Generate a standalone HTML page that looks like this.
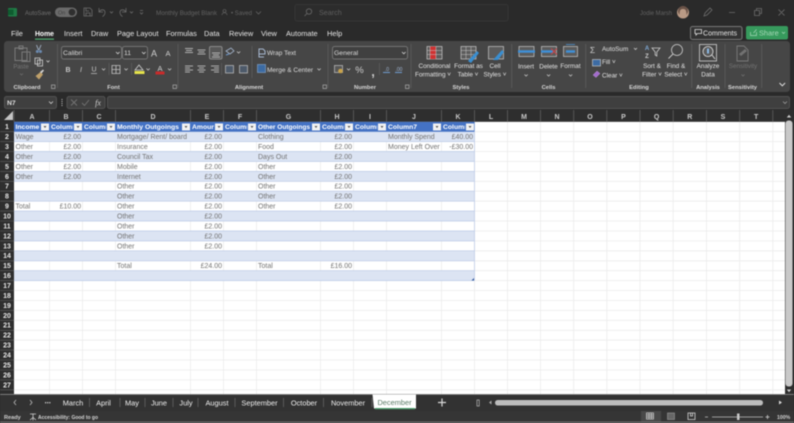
<!DOCTYPE html>
<html lang="en"><head><meta charset="utf-8"><title>Monthly Budget Blank - Excel</title>
<style>
html,body{margin:0;padding:0;width:794px;height:423px;overflow:hidden;background:#2a2a2a}
svg{display:block;filter:blur(.4px)}
text{font-family:"Liberation Sans",sans-serif}
.c text,.c{font-size:7px;fill:#737373}
.h{font-size:6.8px;font-weight:bold;fill:#fff}
.ch{font-size:7px;fill:#c8c8c8;text-anchor:middle;font-weight:bold}
.rn{font-size:7px;fill:#e6e6e6;text-anchor:middle;font-weight:bold}
.t{font-size:7.4px;fill:#e6e6e6}
.r{font-size:6.4px;fill:#e4e4e4}
.rm{font-size:6.4px;fill:#e4e4e4;text-anchor:middle}
.g{font-size:5.8px;fill:#d8d8d8;text-anchor:middle;font-weight:bold}
.s{font-size:7.4px;fill:#efefef;text-anchor:middle}
.ic{fill:none;stroke:#c4c4c4;stroke-width:.8}
</style></head><body>
<svg width="794" height="423" viewBox="0 0 794 423" xmlns="http://www.w3.org/2000/svg">
<rect width="794" height="423" fill="#2a2a2a"/>

<!-- title bar -->
<rect x="8" y="8" width="9" height="8.5" rx="1" fill="#1f7a45"/><rect x="8" y="9.5" width="5.5" height="5.5" fill="#0f5c30"/>
<text x="25" y="15" font-size="6.6" fill="#707070" textLength="26" lengthAdjust="spacingAndGlyphs">AutoSave</text>
<rect x="55" y="7.5" width="22" height="9.500" rx="4.700" fill="#6b6b6b"/><circle cx="72" cy="12.200" r="3.400" fill="#2f2f2f"/>
<text x="58" y="14.600" font-size="5.500" fill="#3f3f3f">On</text>
<path class="ic" style="stroke:#6c6c6c" d="M84 8h6l2 2v6h-8zM86 8v3h3M86 16v-3h4v3"/>
<path class="ic" style="stroke:#6c6c6c" d="M99 8v4h4M99 12c2-3 6-3 6 .5 0 2-1 3-2.500 4"/>
<path class="ic" style="stroke:#6c6c6c" d="M126 8v4h-4M126 12c-2-3-6-3-6 .5 0 2 1 3 2.500 4"/>
<path class="ic" style="stroke:#6c6c6c" d="M110 11.500l1.500 1.500 1.500-1.500M130 11.500l1.500 1.500 1.500-1.500M140 10.500h3M140 12.500l1.500 1.500 1.500-1.500"/>
<text x="156" y="15" font-size="6.400" fill="#636363" textLength="61" lengthAdjust="spacingAndGlyphs">Monthly Budget Blank</text>
<path class="ic" style="stroke:#5e5e5e" d="M222 15c0-3 5-3 5 0M224.500 9.500a1.500 1.500 0 1 0 .01 0"/>
<text x="231" y="15" font-size="6.600" fill="#636363" textLength="21" lengthAdjust="spacingAndGlyphs">• Saved</text>
<path class="ic" style="stroke:#636363" d="M256 11.500l2.500 2.500 2.500-2.500"/>
<rect x="295" y="4.500" width="213" height="16.500" rx="2" fill="#2c2c2c" stroke="#353535"/>
<circle cx="309" cy="11.500" r="2.700" class="ic" style="stroke:#6a6a6a"/><path class="ic" style="stroke:#6a6a6a" d="M307 13.500l-2.500 2.500"/>
<text x="319" y="15" font-size="7.200" fill="#5f5f5f">Search</text>
<text x="640" y="15" font-size="6.400" fill="#626262" textLength="32" lengthAdjust="spacingAndGlyphs">Jodie Marsh</text>
<circle cx="683" cy="12.500" r="6" fill="#b99a85"/><path d="M678 12c0-5 3-6 5-6s5 1 5 6l-1.500 3c0-5-1-6-3.500-6s-3.500 1-3.500 6z" fill="#6a5348"/>
<path class="ic" style="stroke:#6e6e6e" d="M704 16l1-3 5-5 2 2-5 5z"/>
<path class="ic" style="stroke:#6e6e6e" d="M729 12.500h6M754.500 10.500h5v5h-5zM756.500 10.500v-2h5v5h-2M778.500 9.500l6 6M784.500 9.500l-6 6"/>

<!-- comments/share -->
<rect x="690.500" y="26.500" width="51.500" height="13" rx="2" fill="#333" stroke="#777"/>
<path d="M695 29.500h6.500v4h-4l-1.500 1.500v-1.500h-1z" fill="none" stroke="#e0e0e0" stroke-width=".8"/>
<text x="703" y="35.500" font-size="7" fill="#e8e8e8" textLength="34" lengthAdjust="spacingAndGlyphs">Comments</text>
<rect x="746" y="26" width="42" height="13.500" rx="2" fill="#379a5d"/>
<path d="M750.500 32v3.500h6V32M753.500 33l3-3.500" fill="none" stroke="#a7d9b8" stroke-width=".7"/>
<text x="759" y="35.500" font-size="7.400" fill="#a7d9b8">Share</text>
<path d="M782 32l1.500 1.500 1.500-1.500" fill="none" stroke="#a7d9b8" stroke-width=".7"/>

<!-- menu tabs -->
<text class="t" x="11" y="36">File</text>
<text class="t" x="35" y="36" font-weight="bold" style="fill:#fff" textLength="19" lengthAdjust="spacingAndGlyphs">Home</text>
<rect x="35" y="38.500" width="19" height="1.300" fill="#4fa56e"/>
<text class="t" x="64" y="36">Insert</text>
<text class="t" x="91" y="36">Draw</text>
<text class="t" x="117" y="36">Page Layout</text>
<text class="t" x="166" y="36">Formulas</text>
<text class="t" x="204" y="36">Data</text>
<text class="t" x="229" y="36">Review</text>
<text class="t" x="261" y="36">View</text>
<text class="t" x="286" y="36">Automate</text>
<text class="t" x="327" y="36">Help</text>

<!-- ribbon panel -->
<rect x="4" y="41" width="786" height="51" rx="3.500" fill="#464646"/>
<path stroke="#5e5e5e" stroke-width=".8" d="M57.500 44v44M178 44v44M328 44v44M411 44v44M511.700 44v44M585.700 44v44M691.700 44v44M725 44v44M761.700 44v44" fill="none"/>
<g class="g"><text class="g" x="27" y="89">Clipboard</text><text class="g" x="113.500" y="89">Font</text><text class="g" x="249" y="89">Alignment</text><text class="g" x="365" y="89">Number</text><text class="g" x="461" y="89">Styles</text><text class="g" x="548.500" y="89">Cells</text><text class="g" x="639" y="89">Editing</text><text class="g" x="708" y="89">Analysis</text><text class="g" x="742.500" y="89">Sensitivity</text></g>
<path class="ic" style="stroke:#a8a8a8;stroke-width:.7" d="M51.500 85h3.500v3.500h-3.500zM173 85h3.500v3.500H173zM323 85h3.500v3.500H323zM405.500 85h3.500v3.500h-3.500z"/>

<!-- clipboard -->
<path fill="none" stroke="#7a7a7a" stroke-width="1" d="M15 48h12v12.500H15zM19 46h4v3h-4zM22 52h8v9.500h-8z"/>
<text x="21" y="68.500" font-size="6" text-anchor="middle" fill="#777">Paste</text>
<path d="M20 73.500l1.500 1.500 1.500-1.500" fill="none" stroke="#707070" stroke-width=".7"/>
<path d="M36.500 45l2 5M41 45l-2 5" stroke="#a4b4c8" stroke-width=".9" fill="none"/><circle cx="37.300" cy="51.500" r="1.500" fill="#6b8ab0"/><circle cx="40.500" cy="51.500" r="1.500" fill="#6b8ab0"/>
<path d="M35 58h5v6h-5zM37.500 60h5v6h-5z" fill="#464646" stroke="#d4d4d4" stroke-width=".8"/>
<path d="M46.500 60.500l1.500 1.500 1.500-1.500" fill="none" stroke="#d0d0d0" stroke-width=".8"/>
<path d="M35.500 76l5-4 2.500 2.500-4 5z" fill="#bfa06a"/><path d="M40 72l3-2.500 1 1-2.500 3z" fill="#d5d5d5"/>

<!-- font -->
<rect x="61.500" y="46.500" width="60" height="12.500" rx="2" fill="#404040" stroke="#737373"/>
<text x="63" y="55" font-size="6.800" fill="#dadada">Calibri</text>
<path class="ic" style="stroke:#d4d4d4" d="M116 52l1.800 1.800 1.800-1.800"/>
<rect x="122.500" y="46.500" width="25" height="12.500" rx="2" fill="#404040" stroke="#737373"/>
<text x="124" y="55" font-size="6.800" fill="#dadada">11</text>
<path class="ic" style="stroke:#d4d4d4" d="M142 52l1.800 1.800 1.800-1.800"/>
<text x="154" y="56.500" font-size="9" text-anchor="middle" fill="#cfcfcf">A</text>
<text x="168" y="56" font-size="7.500" text-anchor="middle" fill="#cfcfcf">A</text>
<text x="68" y="72" font-size="7" font-weight="bold" text-anchor="middle" fill="#c9c9c9">B</text>
<text x="81" y="72" font-size="7" font-style="italic" text-anchor="middle" fill="#c9c9c9">I</text>
<text x="94" y="71.500" font-size="7" text-anchor="middle" fill="#c9c9c9">U</text><path stroke="#c9c9c9" stroke-width=".7" d="M91 73.500h6"/>
<path class="ic" style="stroke:#c9c9c9" d="M102 68.500l1.600 1.600 1.600-1.600M124.500 68.500l1.600 1.600 1.600-1.600M146.500 68.500l1.600 1.600 1.600-1.600M168 68.500l1.600 1.600 1.600-1.600"/>
<path class="ic" d="M112 65.500h8v8h-8zM116 65.500v8M112 69.500h8"/>
<path stroke="#5e5e5e" stroke-width=".7" d="M109 63v12M131.500 63v12"/>
<path d="M135 70l4-5 4 5z" fill="none" stroke="#d0d0d0" stroke-width=".8"/><rect x="134.500" y="71" width="10" height="3" fill="#e5e34a"/>
<text x="160" y="71" font-size="7.500" text-anchor="middle" fill="#d0d0d0">A</text><rect x="155.500" y="71.500" width="9" height="3" fill="#c92b2b"/>

<!-- alignment -->
<rect x="209.500" y="46.500" width="12.500" height="12.500" rx="1.500" fill="#575757" stroke="#8a8a8a"/>
<path stroke="#cfcfcf" stroke-width=".8" fill="none" d="M185 48.500h8M186 50.500h6M185 52.500h8M197.500 50h8M198.500 52h6M197.500 54h8M212 53h8M213 55h6M212 57h8"/>
<path d="M226 51l5-3 3 3-4 3z" fill="none" stroke="#a6b7cf" stroke-width=".8"/><path d="M226 55l3-1" stroke="#6f9bd0" stroke-width="1"/>
<path class="ic" style="stroke:#c9c9c9" d="M237 51.500l1.600 1.600 1.600-1.600"/>
<path stroke="#cfcfcf" stroke-width=".8" fill="none" d="M185 66h8M185 68h5M185 70h8M185 72h5M197.500 66h8M199 68h5M197.500 70h8M199 72h5M211 66h8M214 68h5M211 70h8M214 72h5"/>
<rect x="225.500" y="65.500" width="8" height="7.500" fill="#4d5a6a" stroke="#c0c0c0" stroke-width=".7"/>
<rect x="239.500" y="65.500" width="8" height="7.500" fill="#4d5a6a" stroke="#c0c0c0" stroke-width=".7"/>
<path stroke="#5e5e5e" stroke-width=".7" d="M221.500 63v12M252 46v32"/>
<path d="M259 49h4l2 2v3h-6zM259 53v4h5" fill="none" stroke="#a6b7cf" stroke-width="1"/>
<text x="267" y="55" font-size="6.800" fill="#dcdcdc" textLength="29" lengthAdjust="spacingAndGlyphs">Wrap Text</text>
<rect x="257.500" y="64.500" width="8" height="8" fill="#3c6ba3" stroke="#7f9fc4" stroke-width=".7"/>
<text x="267" y="72" font-size="6.800" fill="#dcdcdc" textLength="46" lengthAdjust="spacingAndGlyphs">Merge &amp; Center</text>
<path class="ic" style="stroke:#c9c9c9" d="M317.500 68.500l1.600 1.600 1.600-1.600"/>

<!-- number -->
<rect x="332.500" y="46.500" width="75" height="12.500" rx="2" fill="#404040" stroke="#737373"/>
<text x="334" y="55" font-size="6.800" fill="#dadada">General</text>
<path class="ic" style="stroke:#d4d4d4" d="M402 52l1.800 1.800 1.800-1.800"/>
<rect x="334.500" y="65.500" width="8" height="7" fill="#575757" stroke="#c4c4c4" stroke-width=".7"/><circle cx="340.500" cy="71" r="2.300" fill="#c8a24a"/>
<path class="ic" style="stroke:#c9c9c9" d="M347 68.500l1.600 1.600 1.600-1.600"/>
<text x="359.500" y="73" font-size="9.500" text-anchor="middle" fill="#cdcdcd">%</text>
<text x="373" y="76" font-size="13" font-weight="bold" text-anchor="middle" fill="#cdcdcd">,</text>
<path stroke="#5e5e5e" stroke-width=".7" d="M379.500 63v12"/>
<text x="387" y="71" font-size="5" text-anchor="middle" fill="#9fb4d0">.0</text><path d="M383 72.500h7" stroke="#6f9bd0"/>
<text x="399" y="71" font-size="5" text-anchor="middle" fill="#9fb4d0">.00</text><path d="M395 72.500h7" stroke="#6f9bd0"/>

<!-- styles -->
<g fill="none">
<rect x="427" y="46.500" width="15" height="12.500" fill="#5b5b5b" stroke="#c8c8c8" stroke-width=".7"/><rect x="430" y="46.500" width="6" height="12.500" fill="#cf3131"/>
<path stroke="#c8c8c8" stroke-width=".5" d="M427 50.500h15M427 54.500h15M430 46.500v12.500M436 46.500v12.500"/>
<rect x="461" y="46.500" width="15" height="12.500" fill="#5b5b5b" stroke="#c8c8c8" stroke-width=".7"/><path stroke="#c8c8c8" stroke-width=".5" d="M461 50.500h15M461 54.500h15M466 46.500v12.500M471 46.500v12.500"/>
<path d="M468 61l9-10 2 2-8 10z" fill="#3a8ed0"/>
<rect x="488.500" y="46.500" width="15" height="12.500" fill="#5b5b5b" stroke="#c8c8c8" stroke-width=".7"/><path d="M493 60l9-10 2 2-6 8z" fill="#3a8ed0"/>
</g>
<text class="rm" x="434.500" y="68">Conditional</text>
<text class="rm" x="433" y="76.500">Formatting ˅</text>
<text class="rm" x="468.500" y="68">Format as</text>
<text class="rm" x="468" y="76.500">Table ˅</text>
<text class="rm" x="495" y="68">Cell</text>
<text class="rm" x="495" y="76.500">Styles ˅</text>

<!-- cells -->
<rect x="519" y="46.500" width="15" height="10" fill="#5b5b5b" stroke="#c8c8c8" stroke-width=".7"/><path d="M518 51.500h17" stroke="#3f8fd6" stroke-width="2.500"/>
<rect x="541.500" y="46.500" width="15" height="10" fill="#5b5b5b" stroke="#c8c8c8" stroke-width=".7"/><path d="M541 51.500h12" stroke="#3f8fd6" stroke-width="2.500"/><path d="M551 48.500l6 6M557 48.500l-6 6" stroke="#c9464a"/>
<rect x="563.500" y="46.500" width="14" height="10" fill="#5b5b5b" stroke="#c8c8c8" stroke-width=".7"/><path d="M566 51.500h9" stroke="#3f8fd6" stroke-width="2.500"/><path d="M566 44.500h9" stroke="#4f93d0" stroke-width=".8"/>
<text class="rm" x="526" y="68.500">Insert</text><text class="rm" x="548.500" y="68.500">Delete</text><text class="rm" x="570.500" y="68">Format</text>
<path class="ic" style="stroke:#c9c9c9" d="M524.500 74.500l1.600 1.600 1.600-1.600M547 74.500l1.600 1.600 1.600-1.600M569 74.500l1.600 1.600 1.600-1.600"/>

<!-- editing -->
<text x="592.500" y="53" font-size="8.500" text-anchor="middle" fill="#d0d0d0">Σ</text>
<text class="r" x="602" y="51">AutoSum</text>
<path class="ic" style="stroke:#c9c9c9" d="M634 48l1.500 1.500 1.500-1.500"/>
<rect x="592.500" y="59.500" width="8" height="6.500" fill="#3c6ba3" stroke="#c0c0c0" stroke-width=".7"/>
<text class="r" x="602" y="64">Fill ˅</text>
<path d="M593 75l4-4 3 2.500-4 4z" fill="#a26ccc" stroke="#c99be0" stroke-width=".4"/>
<text class="r" x="602" y="77.500">Clear ˅</text>
<text x="647" y="50" font-size="6" text-anchor="middle" fill="#7fa9d6" font-weight="bold">A</text>
<text x="647" y="58" font-size="6" text-anchor="middle" fill="#cdcdcd" font-weight="bold">Z</text>
<path d="M652 48h8l-3.200 4v4l-1.600-1v-3z" fill="none" stroke="#cdcdcd" stroke-width=".8"/>
<circle cx="677" cy="50" r="5.500" fill="none" stroke="#cdcdcd" stroke-width=".8"/><path d="M673 54l-4.500 4.500" stroke="#cdcdcd" stroke-width=".9"/>
<text class="rm" x="652" y="68">Sort &amp;</text><text class="rm" x="652" y="76.500">Filter ˅</text>
<text class="rm" x="676" y="68">Find &amp;</text><text class="rm" x="676" y="76.500">Select ˅</text>

<!-- analysis -->
<rect x="699.500" y="44.500" width="17" height="16.500" fill="#454545" stroke="#d0d0d0" stroke-width=".8"/>
<circle cx="708" cy="51.500" r="5" fill="#5a5a5a" stroke="#dcdcdc" stroke-width=".8"/><path d="M708 48.500v5" stroke="#8ec0ef" stroke-width="1.800"/><path d="M712 55l3 4" stroke="#d0d0d0"/>
<text class="rm" x="708" y="68">Analyze</text><text class="rm" x="708" y="76.500">Data</text>
<!-- sensitivity -->
<path d="M737 46h7l4 4v11h-11z" fill="none" stroke="#7a7a7a" stroke-width=".9"/><path d="M739 54l6-5 2 2-6 5z" fill="#727272"/>
<text x="743" y="68" font-size="6.300" text-anchor="middle" fill="#727272">Sensitivity</text>
<path class="ic" style="stroke:#707070" d="M741.500 74.500l1.500 1.500 1.500-1.500"/>
<path d="M779.500 83l2.800 2.800 2.800-2.800" fill="none" stroke="#e0e0e0" stroke-width="1"/>

<!-- formula bar -->
<rect x="4.500" y="96.500" width="52" height="12" rx="2" fill="#3f3f3f" stroke="#525252"/>
<text x="7" y="105" font-size="6.800" font-weight="bold" fill="#dedede">N7</text>
<path class="ic" style="stroke:#cfcfcf" d="M49 101.500l2 2 2-2"/>
<path stroke="#c0c0c0" stroke-width="1" stroke-dasharray="1 1" d="M62 99v7"/>
<rect x="67" y="96.500" width="38" height="12" rx="2" fill="#3f3f3f" stroke="#525252"/>
<path d="M71 99.500l6 6M77 99.500l-6 6M82 103l2.500 2.500 4.500-5.500" stroke="#737373" fill="none" stroke-width=".9"/>
<text x="98" y="105.500" font-size="8" font-style="italic" text-anchor="middle" fill="#d4d4d4" style="font-family:'Liberation Serif',serif">fx</text>
<rect x="107.500" y="96.500" width="682" height="12" rx="2" fill="#3f3f3f" stroke="#525252"/>
<path class="ic" style="stroke:#9a9a9a" d="M783 101.500l2 2 2-2"/>

<!-- sheet -->
<rect x="14" y="121.700" width="771" height="272.800" fill="#fff"/>
<g stroke="#ececec" stroke-width=".8" fill="none">
<path d="M49.500 122V394M82.500 122V394M115.500 122V394M190.500 122V394M223.500 122V394M256.500 122V394M320.500 122V394M353.500 122V394M386.500 122V394M441.500 122V394M474.500 122V394M507.500 122V394M540.500 122V394M573.700 122V394M606.800 122V394M640 122V394M673.200 122V394M706.500 122V394M739.700 122V394M772.800 122V394"/>
<path d="M14 131.700H785M14 141.600H785M14 151.500H785M14 161.400H785M14 171.400H785M14 181.300H785M14 191.200H785M14 201.200H785M14 211.100H785M14 221H785M14 231H785M14 240.900H785M14 250.800H785M14 260.800H785M14 270.700H785M14 280.600H785M14 290.500H785M14 300.500H785M14 310.400H785M14 320.300H785M14 330.300H785M14 340.200H785M14 350.100H785M14 360H785M14 370H785M14 379.900H785M14 389.800H785"/>
</g>
<!-- table bands -->
<g fill="#dce4f3">
<rect x="14" y="131.700" width="460.500" height="9.900"/><rect x="14" y="151.500" width="460.500" height="9.900"/><rect x="14" y="171.400" width="460.500" height="9.900"/><rect x="14" y="191.200" width="460.500" height="10"/><rect x="14" y="211.100" width="460.500" height="9.900"/><rect x="14" y="231" width="460.500" height="9.900"/><rect x="14" y="250.800" width="460.500" height="10"/><rect x="14" y="270.700" width="460.500" height="9.900"/>
</g>
<g stroke="#bccbe8" stroke-width=".7" fill="none">
<path d="M14 131.700H474.500M14 141.600H474.500M14 151.500H474.500M14 161.400H474.500M14 171.400H474.500M14 181.300H474.500M14 191.200H474.500M14 201.200H474.500M14 211.100H474.500M14 221H474.500M14 231H474.500M14 240.900H474.500M14 250.800H474.500M14 260.800H474.500M14 270.700H474.500M14 280.600H474.500M474.500 122V280.600"/>
</g>
<path d="M474 278v2.500h-2.500z" fill="#2f5597"/>
<!-- table header -->
<rect x="14" y="121.700" width="460.500" height="10" fill="#4472c4"/>
<g class="h">
<text class="h" x="15.500" y="129">Income</text>
<text class="h" x="51" y="129">Column1</text>
<text class="h" x="84" y="129">Column2</text>
<text class="h" x="117" y="129">Monthly Outgoings</text>
<text class="h" x="192" y="129">Amount</text>
<text class="h" x="225" y="129">Column3</text>
<text class="h" x="258" y="129" textLength="52" lengthAdjust="spacingAndGlyphs">Other Outgoings</text>
<text class="h" x="322" y="129">Column4</text>
<text class="h" x="355" y="129">Column5</text>
<text class="h" x="388" y="129">Column7</text>
<text class="h" x="443" y="129">Column6</text>
</g>
<g fill="#4472c4">
<rect x="73" y="122" width="9" height="9.500"/><rect x="106" y="122" width="9" height="9.500"/><rect x="214" y="122" width="9" height="9.500"/><rect x="247" y="122" width="9" height="9.500"/><rect x="344" y="122" width="9" height="9.500"/><rect x="377" y="122" width="9" height="9.500"/><rect x="465" y="122" width="9" height="9.500"/>
</g>
<g fill="#f2f2f2">
<rect x="41" y="123.500" width="8" height="7"/><rect x="74" y="123.500" width="8" height="7"/><rect x="107" y="123.500" width="8" height="7"/><rect x="182" y="123.500" width="8" height="7"/><rect x="215" y="123.500" width="8" height="7"/><rect x="248" y="123.500" width="8" height="7"/><rect x="312" y="123.500" width="8" height="7"/><rect x="345" y="123.500" width="8" height="7"/><rect x="378" y="123.500" width="8" height="7"/><rect x="433" y="123.500" width="8" height="7"/><rect x="466" y="123.500" width="8" height="7"/>
</g>
<g fill="#555">
<path d="M43.500 126h3l-1.500 2zM76.500 126h3l-1.500 2zM109.500 126h3l-1.500 2zM184.500 126h3l-1.500 2zM217.500 126h3l-1.500 2zM250.500 126h3l-1.500 2zM314.500 126h3l-1.500 2zM347.500 126h3l-1.500 2zM380.500 126h3l-1.500 2zM435.500 126h3l-1.500 2zM468.500 126h3l-1.500 2z"/>
</g>

<!-- cell text -->
<g class="c">
<text x="15.500" y="139.100">Wage</text><text x="15.500" y="149">Other</text><text x="15.500" y="158.900">Other</text><text x="15.500" y="168.800">Other</text><text x="15.500" y="178.800">Other</text><text x="15.500" y="208.600">Total</text>
</g>
<g class="c" text-anchor="end">
<text x="81" y="139.100">£2.00</text><text x="81" y="149">£2.00</text><text x="81" y="158.900">£2.00</text><text x="81" y="168.800">£2.00</text><text x="81" y="178.800">£2.00</text><text x="81" y="208.600">£10.00</text>
</g>
<g class="c">
<text x="117" y="139.100">Mortgage/ Rent/ board</text><text x="117" y="149">Insurance</text><text x="117" y="158.900">Council Tax</text><text x="117" y="168.800">Mobile</text><text x="117" y="178.800">Internet</text><text x="117" y="188.700">Other</text><text x="117" y="198.600">Other</text><text x="117" y="208.600">Other</text><text x="117" y="218.500">Other</text><text x="117" y="228.400">Other</text><text x="117" y="238.400">Other</text><text x="117" y="248.300">Other</text><text x="117" y="268.200">Total</text>
</g>
<g class="c" text-anchor="end">
<text x="222" y="139.100">£2.00</text><text x="222" y="149">£2.00</text><text x="222" y="158.900">£2.00</text><text x="222" y="168.800">£2.00</text><text x="222" y="178.800">£2.00</text><text x="222" y="188.700">£2.00</text><text x="222" y="198.600">£2.00</text><text x="222" y="208.600">£2.00</text><text x="222" y="218.500">£2.00</text><text x="222" y="228.400">£2.00</text><text x="222" y="238.400">£2.00</text><text x="222" y="248.300">£2.00</text><text x="222" y="268.200">£24.00</text>
</g>
<g class="c">
<text x="258" y="139.100">Clothing</text><text x="258" y="149">Food</text><text x="258" y="158.900">Days Out</text><text x="258" y="168.800">Other</text><text x="258" y="178.800">Other</text><text x="258" y="188.700">Other</text><text x="258" y="198.600">Other</text><text x="258" y="208.600">Other</text><text x="258" y="268.200">Total</text>
</g>
<g class="c" text-anchor="end">
<text x="352" y="139.100">£2.00</text><text x="352" y="149">£2.00</text><text x="352" y="158.900">£2.00</text><text x="352" y="168.800">£2.00</text><text x="352" y="178.800">£2.00</text><text x="352" y="188.700">£2.00</text><text x="352" y="198.600">£2.00</text><text x="352" y="208.600">£2.00</text><text x="352" y="268.200">£16.00</text>
</g>
<g class="c">
<text x="388" y="139.100">Monthly Spend</text><text x="388" y="149">Money Left Over</text>
</g>
<g class="c" text-anchor="end">
<text x="473" y="139.100">£40.00</text><text x="473" y="149">-£30.00</text>
</g>

<!-- column headers -->
<rect x="0" y="110" width="785" height="11.700" fill="#2e2e2e"/>
<path d="M13 111v9h-9z" fill="#c4c4c4"/>
<path stroke="#5f5f5f" stroke-width=".8" d="M14 110v11.700M49.500 110v11.700M82.500 110v11.700M115.500 110v11.700M190.500 110v11.700M223.500 110v11.700M256.500 110v11.700M320.500 110v11.700M353.500 110v11.700M386.500 110v11.700M441.500 110v11.700M474.500 110v11.700M507.500 110v11.700M540.500 110v11.700M573.700 110v11.700M606.800 110v11.700M640 110v11.700M673.200 110v11.700M706.500 110v11.700M739.700 110v11.700M772.800 110v11.700"/>
<g class="ch">
<text class="ch" x="32" y="119">A</text><text class="ch" x="66" y="119">B</text><text class="ch" x="99" y="119">C</text><text class="ch" x="153" y="119">D</text><text class="ch" x="207" y="119">E</text><text class="ch" x="240" y="119">F</text><text class="ch" x="288.500" y="119">G</text><text class="ch" x="337" y="119">H</text><text class="ch" x="370" y="119">I</text><text class="ch" x="414" y="119">J</text><text class="ch" x="458" y="119">K</text><text class="ch" x="491" y="119">L</text><text class="ch" x="524" y="119">M</text><text class="ch" x="557" y="119">N</text><text class="ch" x="590" y="119">O</text><text class="ch" x="623.400" y="119">P</text><text class="ch" x="656.600" y="119">Q</text><text class="ch" x="689.800" y="119">R</text><text class="ch" x="723" y="119">S</text><text class="ch" x="756.200" y="119">T</text>
</g>

<!-- row headers -->
<rect x="0" y="121.700" width="14" height="272.800" fill="#2e2e2e"/>
<path stroke="#5f5f5f" stroke-width=".6" d="M0 131.700H14M0 141.600H14M0 151.500H14M0 161.400H14M0 171.400H14M0 181.300H14M0 191.200H14M0 201.200H14M0 211.100H14M0 221H14M0 231H14M0 240.900H14M0 250.800H14M0 260.800H14M0 270.700H14M0 280.600H14M0 290.500H14M0 300.500H14M0 310.400H14M0 320.300H14M0 330.300H14M0 340.200H14M0 350.100H14M0 360H14M0 370H14M0 379.900H14M0 389.800H14"/>
<g class="rn">
<text class="rn" x="7" y="129.200">1</text><text class="rn" x="7" y="139.100">2</text><text class="rn" x="7" y="149">3</text><text class="rn" x="7" y="158.900">4</text><text class="rn" x="7" y="168.800">5</text><text class="rn" x="7" y="178.800">6</text><text class="rn" x="7" y="188.700">7</text><text class="rn" x="7" y="198.600">8</text><text class="rn" x="7" y="208.600">9</text><text class="rn" x="7" y="218.500">10</text><text class="rn" x="7" y="228.400">11</text><text class="rn" x="7" y="238.400">12</text><text class="rn" x="7" y="248.300">13</text><text class="rn" x="7" y="258.200">14</text><text class="rn" x="7" y="268.200">15</text><text class="rn" x="7" y="278.100">16</text><text class="rn" x="7" y="288">17</text><text class="rn" x="7" y="297.900">18</text><text class="rn" x="7" y="307.900">19</text><text class="rn" x="7" y="317.800">20</text><text class="rn" x="7" y="327.700">21</text><text class="rn" x="7" y="337.700">22</text><text class="rn" x="7" y="347.600">23</text><text class="rn" x="7" y="357.500">24</text><text class="rn" x="7" y="367.400">25</text><text class="rn" x="7" y="377.400">26</text><text class="rn" x="7" y="387.300">27</text>
</g>

<!-- vertical scrollbar -->
<rect x="785" y="110" width="9" height="285" fill="#2e2e2e"/>
<rect x="785.500" y="120.500" width="7" height="266" rx="3" fill="#c9c9c9"/>
<path d="M786.800 117.500l2.200-2.800 2.200 2.800z" fill="#cfcfcf"/>
<path d="M786.800 389.500l2.200 2.800 2.200-2.800z" fill="#cfcfcf"/>

<!-- tabs bar -->
<rect x="0" y="394.500" width="794" height="16.500" fill="#323232"/>
<rect x="0" y="394" width="794" height=".8" fill="#8e8e8e"/>
<path d="M16 400l-2 2.500 2 2.500M30 400l2 2.500-2 2.500" fill="none" stroke="#b0b0b0" stroke-width=".9"/>
<path d="M45 402.700h6" stroke="#c8c8c8" stroke-width="1.300" stroke-dasharray="1.200 .9"/>
<path stroke="#646464" stroke-width=".8" d="M89.500 398v9M120 398v9M145 398v9M173 398v9M198 398v9M235 398v9M283.500 398v9M323.500 398v9M372 398v9"/>
<g>
<text class="s" x="73" y="405.500">March</text><text class="s" x="103.500" y="405.500">April</text><text class="s" x="132" y="405.500">May</text><text class="s" x="159" y="405.500">June</text><text class="s" x="186" y="405.500">July</text><text class="s" x="217" y="405.500">August</text><text class="s" x="259.500" y="405.500">September</text><text class="s" x="304" y="405.500">October</text><text class="s" x="348" y="405.500">November</text>
</g>
<path d="M372.500 394.500h43.500l0 14h-42z" fill="#fff"/>
<rect x="375" y="408" width="40" height="1.300" fill="#4f9f6e"/>
<text x="394.500" y="405" font-size="7.400" text-anchor="middle" fill="#5a7a66">December</text>
<path d="M438 402.500h8M442 398.500v8" stroke="#d8d8d8" stroke-width="1.200"/>
<rect x="477" y="400" width="2.200" height="6" fill="#2a2a2a" stroke="#bdbdbd" stroke-width=".7"/>
<path d="M491.500 400.500l-2.500 2 2.500 2z" fill="#a8a8a8"/>
<rect x="495" y="400" width="268" height="5.500" rx="2.700" fill="#bcbcbc"/>
<path d="M779 400.500l3 2-3 2z" fill="#d8d8d8"/>

<!-- status bar -->
<rect x="0" y="411" width="794" height="10.500" fill="#353535"/>
<rect x="0" y="421.500" width="794" height="1.500" fill="#6a6a6a"/>
<text x="4" y="419" font-size="5.600" fill="#d0d0d0" font-weight="bold">Ready</text>
<path d="M30 414h6M33 413.500v7M30 420l3-2.500 3 2.500" fill="none" stroke="#cfcfcf" stroke-width=".8"/>
<text x="38" y="419" font-size="5.600" fill="#d6d6d6" font-weight="bold" textLength="60" lengthAdjust="spacingAndGlyphs">Accessibility: Good to go</text>
<rect x="641" y="411" width="20" height="10.500" fill="#494949"/>
<path fill="none" stroke="#d4d4d4" stroke-width=".7" d="M646.500 413h7v6h-7zM646.500 415h7M646.500 417h7M649 413v6M651.300 413v6"/>
<rect x="667.500" y="413" width="7" height="6.500" fill="#666" stroke="#999" stroke-width=".6"/>
<path fill="none" stroke="#d4d4d4" stroke-width=".8" d="M688 413h7v6.500h-7zM690.500 413v3h2v-3"/>
<path d="M705 417h3M712 417h51" stroke="#bdbdbd" stroke-width=".8"/>
<rect x="737" y="413.500" width="2.500" height="6.500" fill="#c8c8c8"/>
<path d="M765.500 417h4M767.500 415v4" stroke="#cfcfcf" stroke-width=".8"/>
<text x="777" y="419" font-size="5.200" fill="#cfcfcf" font-weight="bold">100%</text>
</svg>
</body></html>
